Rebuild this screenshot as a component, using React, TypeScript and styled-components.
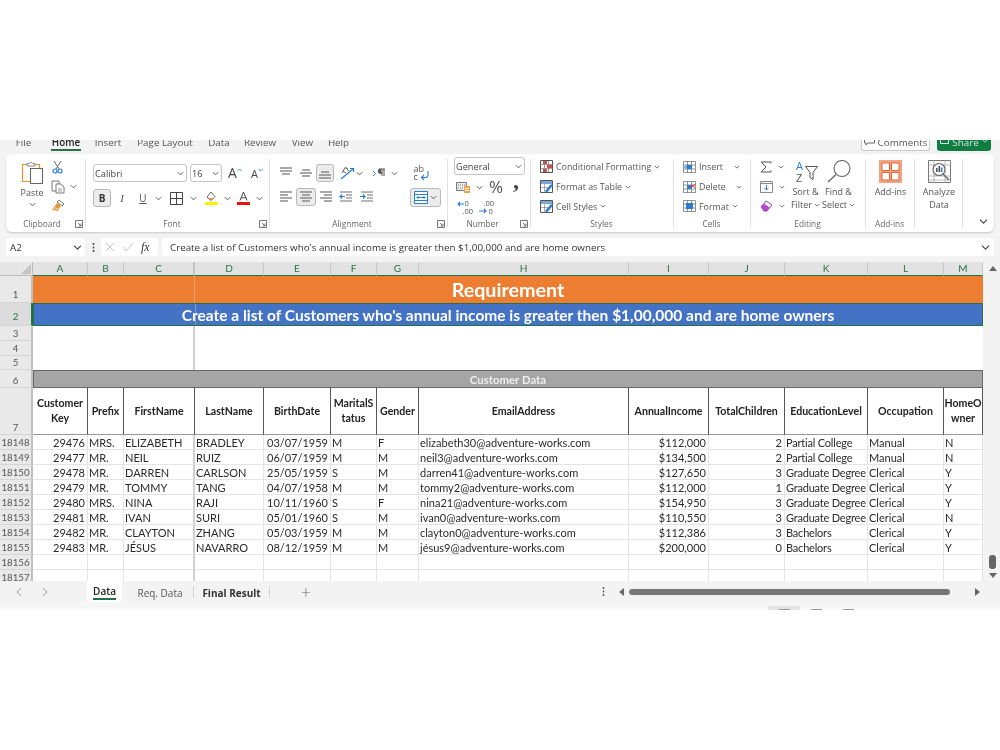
import React from "react";
import styled, { createGlobalStyle } from "styled-components";

const Global = createGlobalStyle`
  html, body { margin: 0; padding: 0; background: #fff; }
  * { box-sizing: border-box; }
`;
const UI = `"Open Sans", "Noto Sans", sans-serif`;
const CELL = `Lato, "Liberation Sans", sans-serif`;

const Page = styled.div`
  width: 1000px; height: 750px; padding-top: 140px; background: #fff; overflow: hidden;
`;
const App_ = styled.div`
  height: 470px; background: #f3f3f3; font-family: ${UI}; color: #444; display: flex; flex-direction: column;
  filter: blur(0.3px);
`;
const MenuBar = styled.div`
  height: 14px; overflow: hidden; display: flex; align-items: flex-start; position: relative; flex: none;
`;
const MenuItem = styled.div<{ $w: number; $on?: boolean }>`
  width: ${p => p.$w}px; text-align: center; font-size: 9.8px; line-height: 12px; margin-top: -3px; height: 17px;
  color: ${p => (p.$on ? "#222" : "#555")}; font-weight: ${p => (p.$on ? 600 : 400)};
  position: relative;
  ${p => p.$on && `&::after{content:"";position:absolute;left:calc(50% - 15px);width:30px;top:12px;height:2px;background:#217346;}`}
`;
const MenuRight = styled.div`
  margin-left: auto; display: flex; gap: 7px; padding-right: 9px;
`;
const CommentBtn = styled.div`
  width: 69px; height: 11px; background: #fff; border: 1px solid #c9c9c9; border-top: none; border-radius: 0 0 3px 3px;
  font-size: 9.8px; line-height: 5px; display: flex; justify-content: center; gap: 3px; color: #555;
`;
const ShareBtn = styled.div`
  width: 54px; height: 11px; background: #107c41; border-radius: 0 0 3px 3px; color: #d5e8dc;
  font-size: 9.8px; line-height: 5px; display: flex; justify-content: center; gap: 3px;
`;
const Ribbon = styled.div`
  margin: 0 6px; height: 78px; background: #fff; border-radius: 6px; display: flex;
  box-shadow: 0 1px 2px rgba(0,0,0,.18); position: relative; flex: none;
`;
const Group = styled.div<{ $w: number; $end?: boolean }>`
  width: ${p => p.$w}px; flex: none; height: 100%; display: flex; flex-direction: column; position: relative;
  ${p => !p.$end && `&::after{content:"";position:absolute;right:0;top:5px;bottom:4px;width:1px;background:#e2e2e2;}`}
`;
const GroupBody = styled.div<{ $pad?: number; $gap?: number; $col?: boolean }>`
  height: 62px; flex: none; display: flex; padding-left: ${p => p.$pad ?? 0}px; gap: ${p => p.$gap ?? 0}px;
  ${p => p.$col && "flex-direction: column;"}
`;
const GroupLabel = styled.div<{ $pr?: number }>`
  font-size: 8.3px; line-height: 12px; color: #666; text-align: center; padding-top: 2px; padding-right: ${p => p.$pr ?? 2}px;
`;
const Launcher = styled.span`
  position: absolute; right: 3px; bottom: 4px; width: 8px; height: 8px; display: flex;
`;
const Svg = styled.svg<{ $m?: string }>`
  flex: none; display: block; ${p => p.$m && `margin: ${p.$m};`}
`;
const Big = styled.div<{ $w: number; $top?: number }>`
  width: ${p => p.$w}px; display: flex; flex-direction: column; align-items: center; flex: none;
  padding-top: ${p => p.$top ?? 6}px; font-size: 9px; line-height: 13px; color: #555; text-align: center;
`;
const BigIcon = styled.div`
  height: 25px; display: flex; align-items: flex-start; justify-content: center; flex: none;
`;
const BigText = styled.div`
  white-space: nowrap; display: flex; align-items: center; justify-content: center; gap: 2px;
`;
const Stack = styled.div<{ $w: number; $gap: number; $top: number }>`
  width: ${p => p.$w}px; flex: none; display: flex; flex-direction: column; gap: ${p => p.$gap}px; padding-top: ${p => p.$top}px;
`;
const Tool = styled.div<{ $gap?: number; $ml?: number }>`
  display: flex; align-items: center; gap: ${p => p.$gap ?? 3}px; height: 20px; font-size: 8.9px; color: #555; white-space: nowrap;
  margin-left: ${p => p.$ml ?? 0}px;
`;
const Row = styled.div<{ $h?: number; $gap?: number; $mt?: number; $ml?: number }>`
  display: flex; align-items: center; height: ${p => p.$h ?? 18}px; gap: ${p => p.$gap ?? 0}px;
  margin-top: ${p => p.$mt ?? 0}px; margin-left: ${p => p.$ml ?? 0}px;
`;
const Combo = styled.div<{ $w: number }>`
  width: ${p => p.$w}px; height: 18px; border: 1px solid #c4c4c4; border-radius: 3px; display: flex; align-items: center;
  justify-content: space-between; padding: 0 2px 0 1px; font-size: 9.2px; color: #444; background: #fff; flex: none;
`;
const Slot = styled.div<{ $w: number; $on?: boolean; $h?: number }>`
  width: ${p => p.$w}px; height: ${p => p.$h ?? 18}px; flex: none; display: flex; align-items: center; justify-content: center; gap: 2px;
  font-size: 11px; color: #444; border-radius: 3px;
  ${p => p.$on && "background:#ececec;border:1px solid #b8b8b8;"}
`;
const LetterB = styled.span`font: 700 10px ${UI}; color: #333;`;
const LetterI = styled.span`font: italic 400 11px "Liberation Serif", serif; color: #555;`;
const LetterU = styled.span`font: 400 10px ${UI}; color: #555; text-decoration: underline;`;
const LetterA = styled.span<{ $s: number }>`font: 400 ${p => p.$s}px ${UI}; color: #444; line-height: 1;`;
const Percent = styled.span`font: 400 17px ${UI}; color: #555; line-height: 18px;`;
const Comma = styled.span`font: 700 24px "Liberation Serif", serif; color: #444; line-height: 10px; margin-top: -14px;`;
const Collapse = styled.div`position: absolute; right: 6px; bottom: 6px; display: flex;`;

const FormulaBar = styled.div`
  margin: 6px 6px 0; height: 18px; display: flex; flex: none; align-items: stretch;
`;
const NameBox = styled.div`
  width: 79px; background: #fff; border-radius: 3px; font-size: 9.8px; color: #333; display: flex; align-items: center;
  justify-content: space-between; padding: 0 3px 0 4px;
`;
const Dots = styled.div`width: 16px; display: flex; align-items: center; justify-content: center;`;
const FxBox = styled.div`
  width: 57px; background: #fff; border-radius: 3px; display: flex; align-items: center; gap: 7px; padding-left: 4px;
`;
const Fx = styled.span`font: italic 400 12px "Liberation Serif", serif; color: #333;`;
const Formula = styled.div`
  flex: 1; margin-left: 4px; background: #fff; border-radius: 3px; font-size: 9.8px; color: #333; display: flex; align-items: center;
  justify-content: space-between; padding: 0 4px 0 8px;
`;

const SheetWrap = styled.div`
  margin-top: 6px; height: 319px; display: flex; flex: none; background: #fff; overflow: hidden;
`;
const Grid = styled.div`
  width: 983px; display: grid; flex: none;
  grid-template-columns: 33px 55px 36px 71px 69px 67px 46px 42px 210px 80px 76px 83px 76px 39px;
  grid-template-rows: 14px 27px 23px 15px 15px 14px 18px 47px repeat(10, 15.05px);
  font-family: ${CELL}; font-size: 11px; color: #222;
`;
const Corner = styled.div`
  background: #e6e6e6; border-right: 1px solid #bbb; border-bottom: 1px solid #bbb; position: relative;
  &::after { content: ""; position: absolute; right: 1px; bottom: 1px; border: 5px solid transparent; border-right-color: #c4c4c4; border-bottom-color: #c4c4c4; }
`;
const ColHead = styled.div<{ $freeze?: boolean }>`
  background: #e2e2e2; border-right: ${p => (p.$freeze ? "2px solid #c4c4c4" : "1px solid #c8c8c8")}; border-bottom: 1px solid #217346;
  color: #217346; font-size: 10px; text-align: center; line-height: 13px;
`;
const RowHead = styled.div<{ $on?: boolean; $pb?: number }>`
  background: ${p => (p.$on ? "#dcdcdc" : "#e9e9e9")}; color: ${p => (p.$on ? "#217346" : "#555")};
  border-bottom: 1px solid #d4d4d4; border-right: 2px solid ${p => (p.$on ? "#217346" : "#c0c0c0")};
  font-size: 9.7px; display: flex; align-items: flex-end; justify-content: center; line-height: 13px; padding-bottom: ${p => p.$pb ?? 0}px; overflow: hidden;
  white-space: nowrap;
`;
const Banner = styled.div<{ $bg: string; $size: number; $sel?: boolean }>`
  grid-column: 2 / -1; background: ${p => p.$bg}; color: #fff; font-weight: 700; font-size: ${p => p.$size}px;
  display: flex; align-items: center; justify-content: center; position: relative; white-space: nowrap;
  ${p => p.$sel && "border: 1.5px solid #217346;"}
`;
const FreezeMark = styled.span`
  position: absolute; left: 161px; top: 0; bottom: 0; width: 1px; background: rgba(210,210,210,.45);
`;
const Blank = styled.div<{ $col: string }>`
  grid-column: ${p => p.$col}; background: #fff;
  ${p => p.$col === "2 / 5" && "border-right: 2px solid #d0d0d0;"}
`;
const Section = styled.div`
  grid-column: 2 / -1; background: #a5a5a5; color: #eee; font-weight: 700; font-size: 11.4px; border: 1px solid #666;
  display: flex; align-items: center; justify-content: center; line-height: 1; padding-top: 1px;
`;
const Head = styled.div`
  border-right: 1px solid #555; border-bottom: 1px solid #999; font-weight: 700; text-align: center; display: flex;
  align-items: center; justify-content: center; line-height: 15px; font-size: 10.6px; padding: 0 1px; color: #222;
`;
const Cell = styled.div<{ $right?: boolean; $freeze?: boolean; $tight?: boolean }>`
  border-right: ${p => (p.$freeze ? "2px solid #d0d0d0" : "1px solid #e4e4e4")}; border-bottom: 1px solid #e4e4e4;
  padding: 1px 2px 0 1px; white-space: nowrap; line-height: 14px; text-align: ${p => (p.$right ? "right" : "left")};
  overflow: visible; color: #2a2a2a;
  ${p => p.$tight && "letter-spacing: -0.2px;"}
`;
const VScroll = styled.div`
  flex: 1; background: #f3f3f3; display: flex; flex-direction: column; align-items: center; padding-top: 3px; padding-left: 3px; position: relative;
`;
const VThumb = styled.div`
  position: absolute; left: 6px; top: 293px; width: 7px; height: 14px; border-radius: 3px; background: #666;
`;
const VDown = styled.div`position: absolute; left: 6px; top: 310px; display: flex;`;
const TabBar = styled.div`
  height: 21px; display: flex; align-items: center; flex: none; position: relative;
`;
const Nav = styled.div`
  width: 87px; display: flex; padding-left: 15px; gap: 16px; flex: none;
`;
const Tab = styled.div<{ $w: number; $on?: boolean; $b?: boolean; $pl?: number }>`
  width: ${p => p.$w}px; height: 21px; flex: none; text-align: center; font-size: 10px; line-height: 25px; color: #555; position: relative;
  padding-left: ${p => p.$pl ?? 0}px;
  ${p => p.$b && "font-weight: 700; color: #333;"}
  ${p => p.$on && `background:#fff;font-weight:600;color:#222;line-height:21px;border-radius:0 0 3px 3px;&::after{content:"";position:absolute;left:6px;right:6px;bottom:2px;height:2px;background:#217346;}`}
`;
const TabSep = styled.span`width: 1px; height: 12px; background: #d4d4d4; flex: none;`;
const Plus = styled.div`width: 72px; text-align: center; font: 300 17px ${CELL}; color: #666; line-height: 21px;`;
const HScroll = styled.div`
  margin-left: auto; width: 400px; display: flex; align-items: center; padding-right: 18px; flex: none;
`;
const More = styled.div`width: 6px; margin-right: 12px; display: flex; justify-content: center;`;
const HTrack = styled.div`flex: 1; display: flex; align-items: center; gap: 3px;`;
const HThumb = styled.div`width: 321px; height: 6px; border-radius: 3px; background: #777; flex: none;`;
const StatusBar = styled.div`
  height: 8px; flex: none; overflow: hidden; display: flex; padding: 4px 0 0 768px; background: linear-gradient(#f6f6f6 75%, #fff 100%);
`;
const ViewBtn = styled.div<{ $on?: boolean }>`
  width: 32px; height: 4px; display: flex; justify-content: center; ${p => p.$on && "background:#e4e4e4;"}
`;
const ViewMark = styled.span`width: 11px; height: 1px; background: #999; margin-top: 3px;`;

/* ---------- icons ---------- */
const Chev = ({ s = 7, m, c = "#555" }: { s?: number; m?: string; c?: string }) => (
  <Svg $m={m} width={s} height={s} viewBox="0 0 8 8"><path d="M1 2.5 4 5.5 7 2.5" fill="none" stroke={c} strokeWidth="1.1" /></Svg>
);
const Launch = () => (
  <Launcher><Svg width="8" height="8" viewBox="0 0 8 8"><path d="M.5 7.5v-7h7v7zM3 3l3 3M6 3.5V6H3.5" fill="none" stroke="#666" strokeWidth=".9" /></Svg></Launcher>
);
const Lines = ({ ys, xs }: { ys: number[]; xs: [number, number][] }) => (
  <Svg width="14" height="14" viewBox="0 0 14 14">
    {ys.map((y, i) => <path key={i} d={`M${xs[i][0]} ${y}H${xs[i][1]}`} stroke="#707070" strokeWidth="1.2" />)}
  </Svg>
);
const full: [number, number] = [1, 13], mid: [number, number] = [3, 11];
const TopA = () => <Lines ys={[2, 5, 8]} xs={[full, full, mid]} />;
const MidA = () => <Lines ys={[4, 7, 10]} xs={[mid, full, mid]} />;
const BotA = () => <Lines ys={[6, 9, 12]} xs={[mid, full, full]} />;
const LeftA = () => <Lines ys={[2, 5, 8, 11]} xs={[full, [1, 9], full, [1, 9]]} />;
const CenterA = () => <Lines ys={[2, 5, 8, 11]} xs={[full, mid, full, mid]} />;
const RightA = () => <Lines ys={[2, 5, 8, 11]} xs={[full, [5, 13], full, [5, 13]]} />;
const Indent = ({ out }: { out?: boolean }) => (
  <Svg width="14" height="14" viewBox="0 0 14 14">
    <path d="M1 2h12M7 5h6M7 8h6M1 11h12" stroke="#707070" strokeWidth="1.1" />
    <path d={out ? "M6 6.5H1M3 4.5l-2 2 2 2" : "M0 6.5h5M3 4.5l2 2-2 2"} fill="none" stroke="#2b7cd3" strokeWidth="1.1" />
  </Svg>
);
const Paste = () => (
  <Svg width="24" height="24" viewBox="0 0 24 24">
    <path d="M2.5 3.5h17v17h-17z" fill="#fff" stroke="#e8912d" strokeWidth="1.2" />
    <path d="M7 5V2.5h2.5a2 2 0 0 1 3.5 0H15V5z" fill="#fff" stroke="#888" />
    <path d="M10.5 7.5h12v15h-12z" fill="#fff" stroke="#666" strokeWidth="1.1" />
  </Svg>
);
const Cut = () => (
  <Svg width="11" height="14" viewBox="0 0 11 14">
    <path d="M2 1l5 8M9 1 4 9" stroke="#666" strokeWidth="1" />
    <circle cx="3" cy="11" r="2" fill="none" stroke="#2b7cd3" strokeWidth="1.2" />
    <circle cx="8" cy="11" r="2" fill="none" stroke="#2b7cd3" strokeWidth="1.2" />
  </Svg>
);
const Copy = () => (
  <Svg width="14" height="14" viewBox="0 0 14 14">
    <path d="M1 1h7v10H1z" fill="#fff" stroke="#777" />
    <path d="M5 4h5l3 3v6H5z" fill="#fff" stroke="#777" />
    <path d="M7 9h4M7 11h4" stroke="#999" />
  </Svg>
);
const Painter = () => (
  <Svg width="14" height="14" viewBox="0 0 14 14">
    <path d="M8 1l5 4-2 2-5-4z" fill="#fff" stroke="#777" />
    <path d="M6 4l4 3-2 2-1 3-6-1 3-4z" fill="#e8912d" />
    <path d="M2.5 10.5 5 8M4.5 11.5 6.5 9" stroke="#fff" strokeWidth=".8" />
  </Svg>
);
const Borders = () => (
  <Svg width="13" height="13" viewBox="0 0 13 13"><path d="M.5.5h12v12H.5zM6.5.5v12M.5 6.5h12" fill="none" stroke="#444" /></Svg>
);
const Fill = () => (
  <Svg width="13" height="14" viewBox="0 0 13 14">
    <path d="M6 1 2 6l4 3.5L10 5.5z" fill="#fff" stroke="#666" />
    <path d="M3 7h6l-3 2.5z" fill="#e8912d" />
    <path d="M0 11h13v3H0z" fill="#ffee00" />
  </Svg>
);
const FontColor = () => (
  <Svg width="13" height="14" viewBox="0 0 13 14">
    <path d="M3 9.5 6.5 1 10 9.5M4.2 6.8h4.6" fill="none" stroke="#444" />
    <path d="M0 11h13v3H0z" fill="#ee1111" />
  </Svg>
);
const Caret = ({ down, c = "#2b9bd3" }: { down?: boolean; c?: string }) => (
  <Svg $m="-7px 0 0 -2px" width="5" height="4" viewBox="0 0 5 4"><path d={down ? "M.5 1l2 2 2-2" : "M.5 3l2-2 2 2"} fill="none" stroke={c} /></Svg>
);
const Orient = () => (
  <Svg width="15" height="14" viewBox="0 0 15 14">
    <path d="M2 7 5 1.5 8 3M3 5l3 2M6 1.5 9 5.5" fill="none" stroke="#666" />
    <path d="M1 13 13 3M10 2.5h3.5V6" fill="none" stroke="#2b7cd3" strokeWidth="1.2" />
  </Svg>
);
const Rtl = () => (
  <Svg width="14" height="12" viewBox="0 0 14 12">
    <path d="M1 4l2.500 2.500L1 9" fill="none" stroke="#2b7cd3" />
    <path d="M7 2h6M10 2v7M12 2v7M10 6.500H8.500a2.200 2.200 0 0 1 0-4.500" fill="#555" stroke="#555" />
  </Svg>
);
const WrapBox = styled.span`font: 400 9px/8px ${UI}; color: #555; width: 13px; height: 18px; position: relative; display: block; padding-top: 1px;`;
const WrapArrow = styled(Svg)`position: absolute; left: 2px; top: 7px;`;
const Wrap = () => (
  <WrapBox>
    ab c
    <WrapArrow width="15" height="12" viewBox="0 0 15 12"><path d="M12 0v4a2.500 2.500 0 0 1-2.500 2.500H6M8 4 5.500 6.500 8 9" fill="none" stroke="#2b7cd3" strokeWidth="1.1" /></WrapArrow>
  </WrapBox>
);
const Merge = () => (
  <Svg width="14" height="13" viewBox="0 0 14 13">
    <path d="M.5.5h13v12H.5z" fill="#fff" stroke="#2b7cd3" />
    <path d="M.5 3.500h13M.5 9.500h13" stroke="#2b7cd3" />
    <path d="M3 6.500h8M4.500 5 3 6.500 4.500 8M9.500 5 11 6.500 9.500 8" fill="none" stroke="#2b7cd3" />
  </Svg>
);
const Account = () => (
  <Svg width="16" height="14" viewBox="0 0 16 14">
    <path d="M.5 2.500h10v8H.5z" fill="#eee" stroke="#777" />
    <path d="M2 5h7M2 8h7" stroke="#666" strokeDasharray="1 1" />
    <path d="M8 6h6v7H8z" fill="#f0a24a" />
    <path d="M9 8.500h4M9 10.500h4" stroke="#fff" />
  </Svg>
);
const DecBox = styled.span`font: 400 7.5px/8px ${UI}; color: #555; width: 19px; height: 16px; position: relative; display: block;`;
const DecLine = styled.span<{ $pl: number }>`display: block; height: 8px; padding-left: ${p => p.$pl}px;`;
const DecArrow = styled(Svg)<{ $t: number }>`position: absolute; left: 0; top: ${p => p.$t}px;`;
const DecInc = ({ dec }: { dec?: boolean }) => (
  <DecBox>
    <DecLine $pl={dec ? 8 : 6}>{dec ? "0" : ".00"}</DecLine>
    <DecLine $pl={dec ? 6 : 11}>{dec ? ".00" : "0"}</DecLine>
    <DecArrow $t={dec ? 1 : 8} width="10" height="8" viewBox="0 0 10 8">
      <path d={dec ? "M7 4H1M3 2 1 4l2 2" : "M1 4h7M6 2l2 2-2 2"} fill="none" stroke="#2b7cd3" strokeWidth="1.1" />
    </DecArrow>
  </DecBox>
);
const CondFmt = () => (
  <Svg width="13" height="13" viewBox="0 0 13 13">
    <path d="M.5.5h12v12H.5z" fill="#fff" stroke="#555" />
    <path d="M3 1h4v3H3zM7 5h5v3H7zM3 9h4v3H3z" fill="#e4473c" />
    <path d="M1 4.500h11M1 8.500h11M4.500 1v11M8.500 1v11" stroke="#777" strokeWidth=".7" />
  </Svg>
);
const TableFmt = () => (
  <Svg width="13" height="13" viewBox="0 0 13 13">
    <path d="M.5.5h12v12H.5z" fill="#fff" stroke="#555" />
    <path d="M1 1h11v3H1z" fill="#7da7d8" />
    <path d="M1 7.500h8M4.500 4v8" stroke="#888" strokeWidth=".7" />
    <path d="M5 11l6-7 2 1.500-6 7z" fill="#2b7cd3" />
  </Svg>
);
const CellIcon = ({ kind }: { kind: "ins" | "del" | "fmt" }) => (
  <Svg width="13" height="12" viewBox="0 0 13 12">
    <path d="M.5.5h12v11H.5zM.5 4h12M.5 8h12M4.500.5v11M8.500.5v11" fill="#fff" stroke="#777" strokeWidth=".8" />
    {kind === "fmt" ? <path d="M3 3h7v6H3z" fill="#2b7cd3" /> : <path d="M4 4h5v4H4z" fill="#2b7cd3" />}
    {kind === "del" && <path d="M8 3l4 4M12 3 8 7" stroke="#e4473c" />}
    {kind === "ins" && <path d="M1 6h3M3 4.500 4.500 6 3 7.500" fill="none" stroke="#2b7cd3" />}
  </Svg>
);
const Sigma = () => (
  <Svg width="12" height="12" viewBox="0 0 12 12"><path d="M11 2.500V1H1l5 5-5 5h10V9.500" fill="none" stroke="#555" /></Svg>
);
const FillDown = () => (
  <Svg width="13" height="12" viewBox="0 0 13 12">
    <path d="M.5.5h12v11H.5z" fill="#fff" stroke="#888" />
    <path d="M.5 2.500h12" stroke="#888" />
    <path d="M6.500 4v5M4.500 7l2 2 2-2" fill="none" stroke="#2b7cd3" />
  </Svg>
);
const Eraser = () => (
  <Svg width="13" height="12" viewBox="0 0 13 12">
    <path d="M1 7l5-6 6 4-5 6H4z" fill="#fff" stroke="#a23db8" />
    <path d="M1 7l3-3.500 5.500 4L7 11H4z" fill="#b24ac8" />
  </Svg>
);
const SortBox = styled.span`width: 25px; height: 24px; padding-left: 3px; position: relative; display: block; font: 400 11px/12px ${UI}; color: #555; text-align: left;`;
const SortA = styled.span`display: block; height: 12px; color: #2b7cd3;`;
const SortZ = styled.span`display: block; height: 12px;`;
const SortFunnel = styled(Svg)`position: absolute; left: 12px; top: 6px;`;
const Sort = () => (
  <SortBox>
    <SortA>A</SortA><SortZ>Z</SortZ>
    <SortFunnel width="13" height="14" viewBox="0 0 13 14"><path d="M.5.500h12l-4.500 6v7l-3-2v-5z" fill="#fff" stroke="#555" /></SortFunnel>
  </SortBox>
);
const Find = () => (
  <Svg width="24" height="23" viewBox="0 0 24 23">
    <circle cx="15" cy="8.500" r="8" fill="none" stroke="#666" strokeWidth="1.1" />
    <path d="M9 14.500 1 22" stroke="#666" strokeWidth="1.3" />
  </Svg>
);
const AddIns = () => (
  <Svg width="23" height="23" viewBox="0 0 23 23">
    <path d="M0 0h23v23H0z" fill="#f2a384" />
    <path d="M3 3h7.500v7.500H3zM12.500 3H20v7.500h-7.500zM3 12.500h7.500V20H3zM12.500 12.500H20V20h-7.500z" fill="#fff" stroke="#e0693a" />
  </Svg>
);
const Analyze = () => (
  <Svg width="23" height="23" viewBox="0 0 23 23">
    <path d="M.5.500h22v22H.5z" fill="#fff" stroke="#777" />
    <path d="M.5 5h22M.5 16h22M.5 20h22M6 .5v22M17 .5v22" stroke="#aaa" strokeWidth=".8" />
    <circle cx="11" cy="9.500" r="6" fill="#fff" stroke="#666" strokeWidth="1.2" />
    <path d="M8 8h1.600v4H8zM10.500 6h1.600v6h-1.600z" fill="#555" />
    <path d="M12.800 7.500h1.600V12h-1.600z" fill="#2b7cd3" />
    <path d="M15 14l6 6" stroke="#666" strokeWidth="1.4" />
  </Svg>
);
const Comment = () => (
  <Svg $m="0" width="11" height="8" viewBox="0 0 11 8"><path d="M.5-3h10V3H4L2 5V3H.5z" fill="none" stroke="#666" /></Svg>
);
const ShareIcon = () => (
  <Svg width="9" height="8" viewBox="0 0 9 8"><path d="M.5-3h8V3.500h-8z" fill="none" stroke="#d5e8dc" /></Svg>
);
const Tri = ({ d }: { d: "u" | "d" | "l" | "r" }) => {
  const p = { u: "M0 6 4 1l4 5z", d: "M0 1l4 5 4-5z", l: "M6 0 1 4l5 4z", r: "M1 0l5 4-5 4z" }[d];
  return <Svg width="8" height="8" viewBox="0 0 8 8"><path d={p} fill="#666" /></Svg>;
};
const NavArrow = ({ right }: { right?: boolean }) => (
  <Svg width="9" height="10" viewBox="0 0 9 10"><path d={right ? "M3 1l4 4-4 4" : "M6 1 2 5l4 4"} fill="none" stroke="#999" /></Svg>
);

/* ---------- data ---------- */
const cols = ["A", "B", "C", "D", "E", "F", "G", "H", "I", "J", "K", "L", "M"];
const heads = ["Customer Key", "Prefix", "FirstName", "LastName", "BirthDate", "MaritalS\u200Btatus", "Gender", "EmailAddress", "AnnualIncome", "TotalChildren", "EducationLevel", "Occupation", "HomeO\u200Bwner"];
const rows = [
  [18148, "29476", "MRS.", "ELIZABETH", "BRADLEY", "03/07/1959", "M", "F", "elizabeth30@adventure-works.com", "$112,000", "2", "Partial College", "Manual", "N"],
  [18149, "29477", "MR.", "NEIL", "RUIZ", "06/07/1959", "M", "M", "neil3@adventure-works.com", "$134,500", "2", "Partial College", "Manual", "N"],
  [18150, "29478", "MR.", "DARREN", "CARLSON", "25/05/1959", "S", "M", "darren41@adventure-works.com", "$127,650", "3", "Graduate Degree", "Clerical", "Y"],
  [18151, "29479", "MR.", "TOMMY", "TANG", "04/07/1958", "M", "M", "tommy2@adventure-works.com", "$112,000", "1", "Graduate Degree", "Clerical", "Y"],
  [18152, "29480", "MRS.", "NINA", "RAJI", "10/11/1960", "S", "F", "nina21@adventure-works.com", "$154,950", "3", "Graduate Degree", "Clerical", "Y"],
  [18153, "29481", "MR.", "IVAN", "SURI", "05/01/1960", "S", "M", "ivan0@adventure-works.com", "$110,550", "3", "Graduate Degree", "Clerical", "N"],
  [18154, "29482", "MR.", "CLAYTON", "ZHANG", "05/03/1959", "M", "M", "clayton0@adventure-works.com", "$112,386", "3", "Bachelors", "Clerical", "Y"],
  [18155, "29483", "MR.", "JÉSUS", "NAVARRO", "08/12/1959", "M", "M", "jésus9@adventure-works.com", "$200,000", "0", "Bachelors", "Clerical", "Y"],
  [18156, "", "", "", "", "", "", "", "", "", "", "", "", ""],
  [18157, "", "", "", "", "", "", "", "", "", "", "", "", ""],
];
const rightCols = new Set([0, 4, 8, 9]);
const menus: [string, number][] = [["File", 47], ["Home", 38], ["Insert", 46], ["Page Layout", 68], ["Data", 40], ["Review", 42], ["View", 43], ["Help", 29]];

export default function App() {
  return (
    <Page>
      <Global />
      <App_>
        <MenuBar>
          {menus.map(([m, w]) => <MenuItem key={m} $w={w} $on={m === "Home"}>{m}</MenuItem>)}
          <MenuRight>
            <CommentBtn><Comment />Comments</CommentBtn>
            <ShareBtn><ShareIcon />Share<Chev s={6} m="-2px 0 0" c="#d5e8dc" /></ShareBtn>
          </MenuRight>
        </MenuBar>
        <Ribbon>
          <Group $w={80}>
            <GroupBody $pad={8}>
              <Big $w={36} $top={7}><BigIcon><Paste /></BigIcon><BigText>Paste</BigText><Chev m="2px 0 0" /></Big>
              <Stack $w={30} $gap={0} $top={3}>
                <Tool $ml={2}><Cut /></Tool>
                <Tool $ml={1} $gap={5}><Copy /><Chev /></Tool>
                <Tool $ml={1}><Painter /></Tool>
              </Stack>
            </GroupBody>
            <GroupLabel $pr={8}>Clipboard</GroupLabel><Launch />
          </Group>
          <Group $w={184}>
            <GroupBody $col>
              <Row $mt={10} $ml={7} $gap={3}>
                <Combo $w={94}>Calibri<Chev /></Combo>
                <Combo $w={32}>16<Chev /></Combo>
                <Slot $w={20}><LetterA $s={14}>A</LetterA><Caret /></Slot>
                <Slot $w={18}><LetterA $s={11}>A</LetterA><Caret down /></Slot>
              </Row>
              <Row $mt={7} $ml={7}>
                <Slot $w={18} $on><LetterB>B</LetterB></Slot>
                <Slot $w={22}><LetterI>I</LetterI></Slot>
                <Slot $w={20}><LetterU>U</LetterU></Slot>
                <Slot $w={11}><Chev /></Slot>
                <Slot $w={24}><Borders /></Slot>
                <Slot $w={10}><Chev /></Slot>
                <Slot $w={26}><Fill /></Slot>
                <Slot $w={6}><Chev /></Slot>
                <Slot $w={26}><FontColor /></Slot>
                <Slot $w={6}><Chev /></Slot>
              </Row>
            </GroupBody>
            <GroupLabel $pr={12}>Font</GroupLabel><Launch />
          </Group>
          <Group $w={178}>
            <GroupBody $col>
              <Row $mt={10} $ml={5}>
                <Slot $w={21}><TopA /></Slot>
                <Slot $w={20}><MidA /></Slot>
                <Slot $w={18} $on><BotA /></Slot>
                <Slot $w={5} />
                <Slot $w={16}><Orient /></Slot>
                <Slot $w={8}><Chev /></Slot>
                <Slot $w={8} />
                <Slot $w={16}><Rtl /></Slot>
                <Slot $w={14}><Chev /></Slot>
                <Slot $w={9} />
                <Slot $w={20}><Wrap /></Slot>
              </Row>
              <Row $mt={6} $ml={5}>
                <Slot $w={21}><LeftA /></Slot>
                <Slot $w={20} $on><CenterA /></Slot>
                <Slot $w={20}><RightA /></Slot>
                <Slot $w={20}><Indent out /></Slot>
                <Slot $w={22}><Indent /></Slot>
                <Slot $w={32} />
                <Slot $w={31} $on $h={19}><Merge /><Chev /></Slot>
              </Row>
            </GroupBody>
            <GroupLabel $pr={14}>Alignment</GroupLabel><Launch />
          </Group>
          <Group $w={83}>
            <GroupBody $col>
              <Row $mt={3} $ml={6}><Combo $w={71}>General<Chev /></Combo></Row>
              <Row $mt={3} $ml={8}>
                <Slot $w={16}><Account /></Slot>
                <Slot $w={14}><Chev /></Slot>
                <Slot $w={20}><Percent>%</Percent></Slot>
                <Slot $w={20}><Comma>,</Comma></Slot>
              </Row>
              <Row $mt={2} $ml={8}>
                <Slot $w={20}><DecInc dec /></Slot>
                <Slot $w={22}><DecInc /></Slot>
              </Row>
            </GroupBody>
            <GroupLabel $pr={14}>Number</GroupLabel><Launch />
          </Group>
          <Group $w={143}>
            <GroupBody $pad={9}>
              <Stack $w={130} $gap={0} $top={3}>
                <Tool><CondFmt />Conditional Formatting<Chev s={6} /></Tool>
                <Tool><TableFmt />Format as Table<Chev s={6} /></Tool>
                <Tool><TableFmt />Cell Styles<Chev s={6} /></Tool>
              </Stack>
            </GroupBody>
            <GroupLabel>Styles</GroupLabel>
          </Group>
          <Group $w={77}>
            <GroupBody $pad={9}>
              <Stack $w={66} $gap={0} $top={3}>
                <Tool><CellIcon kind="ins" />Insert<Chev m="0 0 0 8px" s={6} /></Tool>
                <Tool><CellIcon kind="del" />Delete<Chev m="0 0 0 7px" s={6} /></Tool>
                <Tool><CellIcon kind="fmt" />Format<Chev s={6} /></Tool>
              </Stack>
            </GroupBody>
            <GroupLabel>Cells</GroupLabel>
          </Group>
          <Group $w={115}>
            <GroupBody $pad={9}>
              <Stack $w={29} $gap={0} $top={3}>
                <Tool $gap={6}><Sigma /><Chev s={6} /></Tool>
                <Tool $gap={6}><FillDown /><Chev s={6} /></Tool>
                <Tool $gap={6}><Eraser /><Chev s={6} /></Tool>
              </Stack>
              <Big $w={33} $top={6}><BigIcon><Sort /></BigIcon><BigText>Sort &amp;</BigText><BigText>Filter<Chev s={6} /></BigText></Big>
              <Big $w={33} $top={6}><BigIcon><Find /></BigIcon><BigText>Find &amp;</BigText><BigText>Select<Chev s={6} /></BigText></Big>
            </GroupBody>
            <GroupLabel>Editing</GroupLabel>
          </Group>
          <Group $w={49}>
            <GroupBody><Big $w={49} $top={6}><BigIcon><AddIns /></BigIcon><BigText>Add-ins</BigText></Big></GroupBody>
            <GroupLabel>Add-ins</GroupLabel>
          </Group>
          <Group $w={48}>
            <GroupBody><Big $w={48} $top={6}><BigIcon><Analyze /></BigIcon><BigText>Analyze</BigText><BigText>Data</BigText></Big></GroupBody>
          </Group>
          <Collapse><Chev s={9} /></Collapse>
        </Ribbon>
        <FormulaBar>
          <NameBox>A2<Chev s={9} /></NameBox>
          <Dots>
            <Svg width="3" height="9" viewBox="0 0 3 9"><path d="M1.500 0v2M1.500 3.500v2M1.500 7v2" stroke="#444" strokeWidth="1.5" /></Svg>
          </Dots>
          <FxBox>
            <Svg width="10" height="10" viewBox="0 0 10 10"><path d="M1 1l8 8M9 1 1 9" stroke="#c4c4c4" /></Svg>
            <Svg width="12" height="10" viewBox="0 0 12 10"><path d="M1 5l3 4 7-8" fill="none" stroke="#c4c4c4" /></Svg>
            <Fx>fx</Fx>
          </FxBox>
          <Formula>Create a list of Customers who's annual income is greater then $1,00,000 and are home owners<Chev s={9} /></Formula>
        </FormulaBar>
        <SheetWrap>
          <Grid>
            <Corner />
            {cols.map(c => <ColHead key={c} $freeze={c === "C"}>{c}</ColHead>)}
            <RowHead $pb={1}>1</RowHead>
            <Banner $bg="#ed7d31" $size={19.7}><FreezeMark />Requirement</Banner>
            <RowHead $on $pb={2}>2</RowHead>
            <Banner $bg="#4472c4" $size={15.5} $sel><FreezeMark />Create a list of Customers who's annual income is greater then $1,00,000 and are home owners</Banner>
            {[3, 4, 5].map(n => (
              <React.Fragment key={n}>
                <RowHead>{n}</RowHead>
                <Blank $col="2 / 5" />
                <Blank $col="5 / -1" />
              </React.Fragment>
            ))}
            <RowHead>6</RowHead>
            <Section>Customer Data</Section>
            <RowHead>7</RowHead>
            {heads.map(h => <Head key={h}>{h}</Head>)}
            {rows.map(r => (
              <React.Fragment key={r[0] as number}>
                <RowHead>{r[0]}</RowHead>
                {r.slice(1).map((v, i) => <Cell key={i} $right={rightCols.has(i)} $freeze={i === 2} $tight={i === 10}>{v}</Cell>)}
              </React.Fragment>
            ))}
          </Grid>
          <VScroll>
            <Tri d="u" />
            <VThumb />
            <VDown><Tri d="d" /></VDown>
          </VScroll>
        </SheetWrap>
        <TabBar>
          <Nav><NavArrow /><NavArrow right /></Nav>
          <Tab $w={35} $on>Data</Tab>
          <Tab $w={71} $pl={5}>Req. Data</Tab>
          <TabSep />
          <Tab $w={75} $b>Final Result</Tab>
          <TabSep />
          <Plus>+</Plus>
          <HScroll>
            <More>
              <Svg width="3" height="9" viewBox="0 0 3 9"><path d="M1.500 0v2M1.500 3.500v2M1.500 7v2" stroke="#555" strokeWidth="1.4" /></Svg>
            </More>
            <HTrack><Tri d="l" /><HThumb /></HTrack>
            <Tri d="r" />
          </HScroll>
        </TabBar>
        <StatusBar>
          <ViewBtn $on><ViewMark /></ViewBtn>
          <ViewBtn><ViewMark /></ViewBtn>
          <ViewBtn><ViewMark /></ViewBtn>
        </StatusBar>
      </App_>
    </Page>
  );
}
